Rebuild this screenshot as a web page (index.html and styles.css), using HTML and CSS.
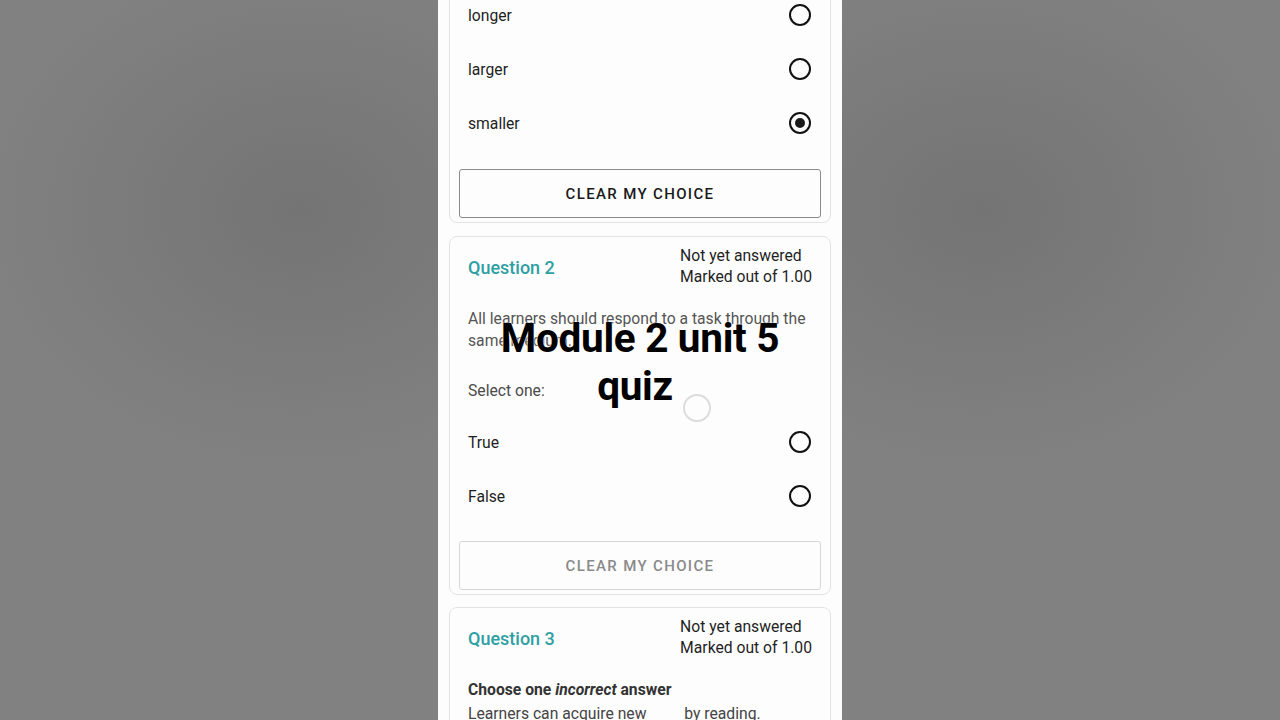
FILE: index.html
```html
<!DOCTYPE html>
<html>
<head>
<meta charset="utf-8">
<link rel="stylesheet" href="styles.css">
</head>
<body>
<div class="stage">
  <div class="phone">
    <div class="card card-first">
      <div class="option"><span>longer</span><span class="radio"></span></div>
      <div class="option"><span>larger</span><span class="radio"></span></div>
      <div class="option"><span>smaller</span><span class="radio checked"></span></div>
      <button class="clear">CLEAR MY CHOICE</button>
    </div>

    <div class="card">
      <div class="qhead">
        <div class="qtitle">Question 2</div>
        <div class="qstatus">Not yet answered<br>Marked out of 1.00</div>
      </div>
      <div class="qtext">All learners should respond to a task through the same medium.</div>
      <div class="select">Select one:</div>
      <div class="option"><span>True</span><span class="radio"></span></div>
      <div class="option"><span>False</span><span class="radio"></span></div>
      <button class="clear disabled">CLEAR MY CHOICE</button>
    </div>

    <div class="card">
      <div class="qhead">
        <div class="qtitle">Question 3</div>
        <div class="qstatus">Not yet answered<br>Marked out of 1.00</div>
      </div>
      <div class="qbold">Choose one <em>incorrect</em> answer</div>
      <div class="qtext2">Learners can acquire new <span class="blank"></span> by reading.</div>
    </div>

    <div class="overlay-title">Module 2 unit 5<br><span class="l2">quiz</span></div>
    <div class="touch"></div>
  </div>
</div>
</body>
</html>
```

FILE: styles.css
```css
html, body {
  margin: 0;
  padding: 0;
  height: 100%;
}
body {
  font-family: Roboto, "Noto Sans", "Liberation Sans", sans-serif;
  background:
    radial-gradient(ellipse 320px 260px at 300px 210px, #747474 0%, rgba(120,120,120,0) 100%),
    radial-gradient(ellipse 320px 260px at 980px 210px, #747474 0%, rgba(120,120,120,0) 100%),
    #818181;
  overflow: hidden;
}
.stage {
  height: 720px;
  display: flex;
  justify-content: center;
}
.phone {
  position: relative;
  width: 404px;
  height: 720px;
  background: #fdfdfd;
  overflow: hidden;
  padding: 0 11px 0 11px;
  box-sizing: border-box;
}
.card {
  border: 1px solid #e3e3e3;
  border-radius: 8px;
  background: #fdfdfd;
  padding: 8px 9px 4px 9px;
  margin-bottom: 12px;
  box-sizing: border-box;
}
.card-first {
  margin-top: -21px;
  padding-top: 8px;
  margin-bottom: 13px;
}
.option {
  height: 54px;
  display: flex;
  align-items: center;
  justify-content: space-between;
  padding: 0 10px 0 9px;
  font-size: 15.7px;
  color: #1f1f1f;
}
.radio {
  width: 18px;
  height: 18px;
  border: 2px solid #111;
  border-radius: 50%;
  display: flex;
  align-items: center;
  justify-content: center;
}
.radio.checked::after {
  content: "";
  width: 10px;
  height: 10px;
  border-radius: 50%;
  background: #1a1a1a;
}
.clear {
  display: block;
  width: 100%;
  height: 49px;
  margin-top: 19px;
  border: 1px solid #8a8a8a;
  border-radius: 3px;
  background: #fdfdfd;
  font-family: Roboto, "Noto Sans", "Liberation Sans", sans-serif;
  font-size: 15px;
  font-weight: 500;
  letter-spacing: 1.35px;
  color: #1a1a1a;
}
.clear.disabled {
  border-color: #d6d6d6;
  color: #8a8a8a;
  margin-top: 18px;
}
.qhead {
  display: flex;
  justify-content: space-between;
  align-items: center;
  padding: 0 9px 0 9px;
}
.qhead .qtitle {
  padding-top: 2px;
}
.qtitle {
  font-size: 18px;
  font-weight: 500;
  color: #2e9fa3;
}
.qstatus {
  font-size: 15.7px;
  line-height: 21px;
  color: #1f1f1f;
}
.qtext {
  margin-top: 21px;
  padding: 0 9px 0 9px;
  font-size: 15.7px;
  line-height: 22px;
  color: #555;
}
.select {
  margin-top: 28px;
  padding: 0 9px;
  font-size: 15.7px;
  line-height: 22px;
  color: #4a4a4a;
  margin-bottom: 13px;
}
.qbold {
  margin-top: 20px;
  padding: 0 9px;
  font-size: 15.7px;
  font-weight: 700;
  line-height: 24px;
  color: #333;
}
.qtext2 {
  padding: 0 9px;
  font-size: 15.7px;
  line-height: 24px;
  color: #444;
}
.blank {
  display: inline-block;
  width: 30px;
}
.overlay-title {
  position: absolute;
  left: 0;
  right: 0;
  top: 314px;
  text-align: center;
  font-size: 40.5px;
  font-weight: 700;
  line-height: 48px;
  color: #000;
  text-shadow: 0 0 2px #fff, 0 0 1px #fff;
  letter-spacing: -0.3px;
}
.l2 {
  display: inline-block;
  margin-right: 10px;
}
.touch {
  position: absolute;
  left: 245px;
  top: 394px;
  width: 24px;
  height: 24px;
  border: 2px solid #dcdcdc;
  border-radius: 50%;
}
```
